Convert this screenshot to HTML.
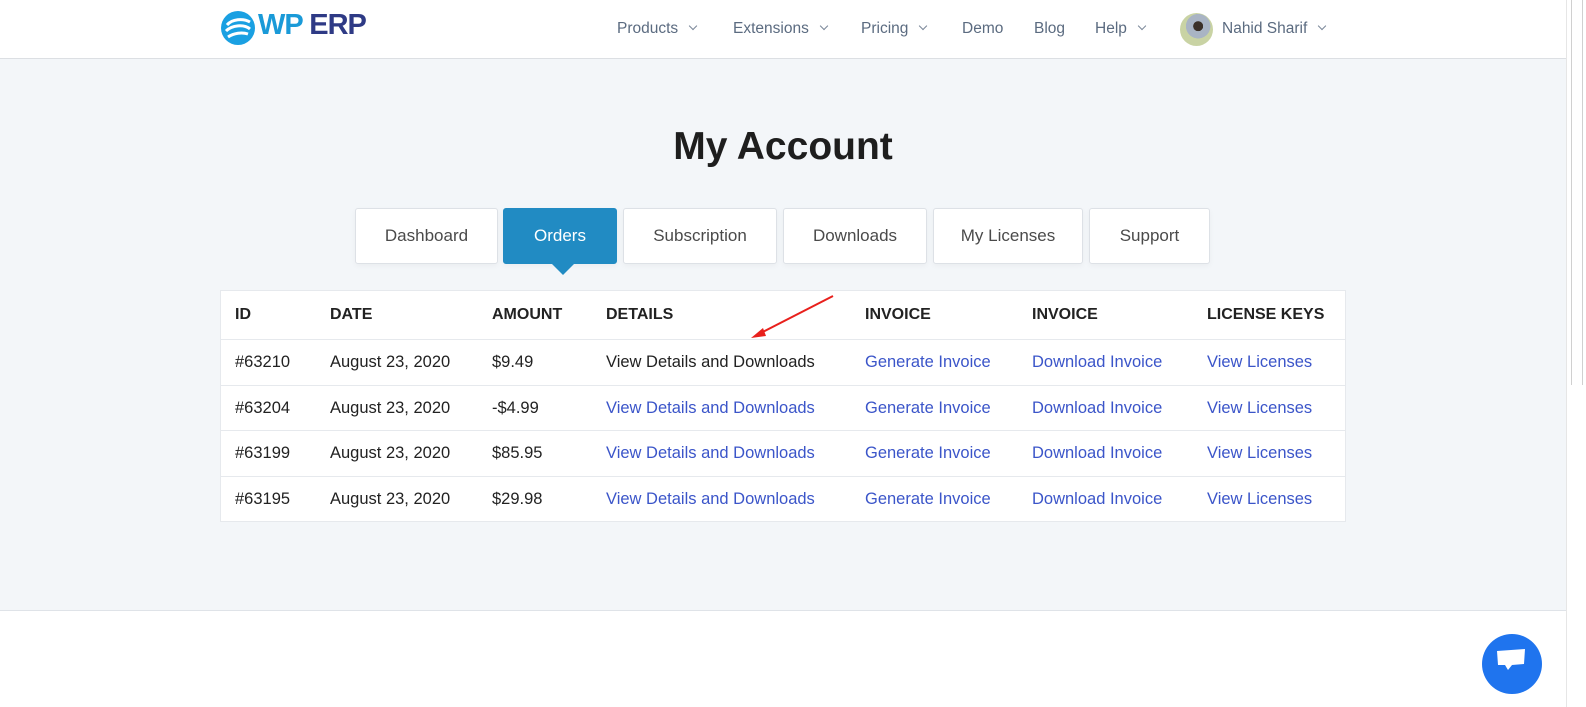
<!DOCTYPE html>
<html><head><meta charset="utf-8"><style>
*{margin:0;padding:0;box-sizing:border-box}
body{width:1586px;height:707px;overflow:hidden;background:#fff;font-family:"Liberation Sans",sans-serif;position:relative}
.hdr{position:absolute;left:0;top:0;width:1566px;height:59px;background:#fff;border-bottom:1px solid #dcdfe3}
.main{position:absolute;left:0;top:59px;width:1566px;height:552px;background:#f3f6f9;border-bottom:1px solid #dfe3e8}
.sb{position:absolute;left:1566px;top:0;width:20px;height:707px;background:#fff;border-left:1px solid #e6e6e6}
.sb div{position:absolute;left:4px;top:0;width:12px;height:385px;background:#fff;border-left:1px solid #d0d0d0;border-right:1px solid #d0d0d0}
.nav{position:absolute;top:20px;font-size:15.5px;color:#5b6b80}
.chev{display:inline-block;width:6px;height:6px;border-right:1.4px solid #7a8799;border-bottom:1.4px solid #7a8799;transform:rotate(45deg);margin-left:12px;position:relative;top:-4px}
h1{position:absolute;left:0;width:1566px;top:125px;text-align:center;font-size:39px;font-weight:bold;color:#1e1e1e}
.tab{position:absolute;top:208px;height:56px;background:#fff;border:1px solid #dde1e6;border-radius:3px;font-size:17px;color:#4a4a4a;text-align:center;line-height:54px;box-shadow:0 2px 6px rgba(0,0,0,.04)}
.tab.act{background:#218bc3;border-color:#218bc3;color:#fff}
.tri{position:absolute;left:551px;top:263px;width:0;height:0;border-left:12px solid transparent;border-right:12px solid transparent;border-top:12px solid #218bc3}
.tbl{position:absolute;left:220px;top:290px;width:1126px;height:232px;background:#fff;border:1px solid #e6e9ed}
.row{position:absolute;left:0;width:1124px;border-bottom:1px solid #e6e9ed}
.c{position:absolute;font-size:16.5px;color:#222;white-space:nowrap}
.h .c{font-weight:bold;font-size:16px;color:#222}
.l{color:#3b55c9}
</style></head><body>
<div class="hdr">
<svg style="position:absolute;left:220px;top:10px" width="36" height="36" viewBox="0 0 36 36"><circle cx="18" cy="18" r="17" fill="#1aa0e2"/><path d="M7 15c5-6 16-7 23-3M6 21c6-6 18-7 24-2M8 27c6-4 14-5 20-3" stroke="#fff" stroke-width="3" fill="none"/></svg>
<div style="position:absolute;left:258px;top:9px;font-size:29px;font-weight:bold;letter-spacing:-1px"><span style="color:#1a9ad8">WP</span> <span style="color:#2e3a85">ERP</span></div>
<div class="nav" style="left:617px">Products<span class="chev"></span></div>
<div class="nav" style="left:733px">Extensions<span class="chev"></span></div>
<div class="nav" style="left:861px">Pricing<span class="chev"></span></div>
<div class="nav" style="left:962px">Demo</div>
<div class="nav" style="left:1034px">Blog</div>
<div class="nav" style="left:1095px">Help<span class="chev"></span></div>
<div style="position:absolute;left:1180px;top:13px;width:33px;height:33px;border-radius:50%;background:radial-gradient(circle at 55% 40%,#3b3028 0 18%,#a9b4c4 19% 45%,#c9d3a4 46%)"></div>
<div class="nav" style="left:1222px">Nahid Sharif<span class="chev"></span></div>
</div>
<div class="main"></div>
<h1>My Account</h1>
<div class="tab" style="left:355px;width:143px">Dashboard</div>
<div class="tab act" style="left:503px;width:114px">Orders</div>
<div class="tri"></div>
<div class="tab" style="left:623px;width:154px">Subscription</div>
<div class="tab" style="left:783px;width:144px">Downloads</div>
<div class="tab" style="left:933px;width:150px">My Licenses</div>
<div class="tab" style="left:1089px;width:121px">Support</div>
<div class="tbl">
<div class="row h" style="top:0;height:49px"><div class="c" style="left:14px;top:15px">ID</div><div class="c" style="left:109px;top:15px">DATE</div><div class="c" style="left:271px;top:15px">AMOUNT</div><div class="c" style="left:385px;top:15px">DETAILS</div><div class="c" style="left:644px;top:15px">INVOICE</div><div class="c" style="left:811px;top:15px">INVOICE</div><div class="c" style="left:986px;top:15px">LICENSE KEYS</div></div>
<div class="row" style="top:49px;height:46px"><div class="c" style="left:14px;top:13px">#63210</div><div class="c" style="left:109px;top:13px">August 23, 2020</div><div class="c" style="left:271px;top:13px">$9.49</div><div class="c" style="left:385px;top:13px">View Details and Downloads</div><div class="c l" style="left:644px;top:13px">Generate Invoice</div><div class="c l" style="left:811px;top:13px">Download Invoice</div><div class="c l" style="left:986px;top:13px">View Licenses</div></div>
<div class="row" style="top:95px;height:45px"><div class="c" style="left:14px;top:13px">#63204</div><div class="c" style="left:109px;top:13px">August 23, 2020</div><div class="c" style="left:271px;top:13px">-$4.99</div><div class="c l" style="left:385px;top:13px">View Details and Downloads</div><div class="c l" style="left:644px;top:13px">Generate Invoice</div><div class="c l" style="left:811px;top:13px">Download Invoice</div><div class="c l" style="left:986px;top:13px">View Licenses</div></div>
<div class="row" style="top:140px;height:46px"><div class="c" style="left:14px;top:13px">#63199</div><div class="c" style="left:109px;top:13px">August 23, 2020</div><div class="c" style="left:271px;top:13px">$85.95</div><div class="c l" style="left:385px;top:13px">View Details and Downloads</div><div class="c l" style="left:644px;top:13px">Generate Invoice</div><div class="c l" style="left:811px;top:13px">Download Invoice</div><div class="c l" style="left:986px;top:13px">View Licenses</div></div>
<div class="row" style="top:186px;height:45px;border:0"><div class="c" style="left:14px;top:13px">#63195</div><div class="c" style="left:109px;top:13px">August 23, 2020</div><div class="c" style="left:271px;top:13px">$29.98</div><div class="c l" style="left:385px;top:13px">View Details and Downloads</div><div class="c l" style="left:644px;top:13px">Generate Invoice</div><div class="c l" style="left:811px;top:13px">Download Invoice</div><div class="c l" style="left:986px;top:13px">View Licenses</div></div>
</div>
<svg style="position:absolute;left:745px;top:292px" width="95" height="50"><line x1="88" y1="4" x2="12" y2="43" stroke="#e8201c" stroke-width="2"/><path d="M6 46 L18 36 L21 44 Z" fill="#e8201c"/></svg>
<div style="position:absolute;left:1482px;top:634px;width:60px;height:60px;border-radius:50%;background:#1f74ee"></div>
<svg style="position:absolute;left:1496px;top:649px" width="32" height="30"><path d="M1 2 L29 0 L28 15 L16 16 L12 21 L9 16 L2 16 Z" fill="#fff"/></svg>
<div class="sb"><div></div></div>
</body></html>
